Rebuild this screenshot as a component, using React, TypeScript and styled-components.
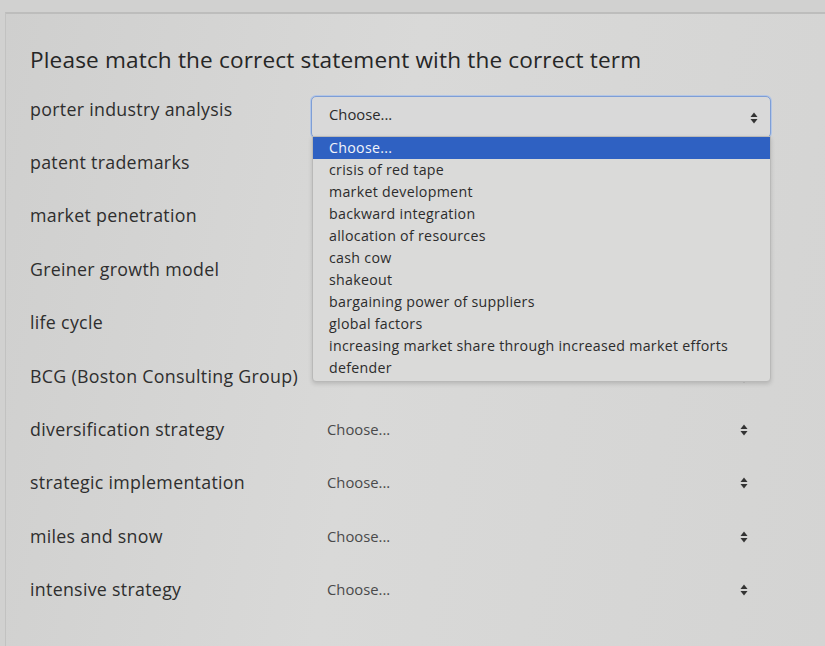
import React from "react";
import styled, { createGlobalStyle } from "styled-components";

const Global = createGlobalStyle`
  html, body { margin: 0; padding: 0; }
  body {
    background: #d1d1d0;
    font-family: "Open Sans", "Noto Sans", sans-serif;
    color: #333;
    width: 825px;
    height: 646px;
    overflow: hidden;
  }
`;

const Frame = styled.div`
  margin: 12px 0 0 5px;
  height: 640px;
  border-top: 2px solid #bdbdbc;
  border-left: 1px solid #c2c2c1;
  background: linear-gradient(100deg, #cfcfce 0%, #d9d9d8 45%, #d4d4d3 100%);
  padding: 24px 0 0 24px;
  box-sizing: border-box;
`;

const Title = styled.h1`
  margin: 0;
  font-size: 22.6px;
  font-weight: 400;
  color: #262626;
  letter-spacing: 0.15px;
  line-height: 44px;
`;

const Rows = styled.div`
  display: grid;
  grid-template-columns: 281px 460px;
  grid-auto-rows: 53.4px;
`;

const Label = styled.div`
  display: flex;
  align-items: center;
  font-size: 17.8px;
  color: #2e2e2e;
  letter-spacing: 0.3px;
`;

const SelectCell = styled.div`
  position: relative;
  display: flex;
  align-items: center;
`;

const SelectBox = styled.div<{ $focused?: boolean }>`
  width: 100%;
  height: 42px;
  box-sizing: border-box;
  margin-top: ${(p) => (p.$focused ? "16px" : "0")};
  display: flex;
  align-items: center;
  justify-content: space-between;
  padding: ${(p) => (p.$focused ? "0 12px 5px 17px" : "0 22px 0 15px")};
  border-radius: 5px;
  border: 1px solid ${(p) => (p.$focused ? "#7e9ed6" : "transparent")};
  box-shadow: ${(p) => (p.$focused ? "0 0 0 1px #b3c6e6" : "none")};
  background: ${(p) => (p.$focused ? "#d9d9d9" : "transparent")};
  font-size: 14.8px;
  color: ${(p) => (p.$focused ? "#2b2b2b" : "#4a4a4a")};
`;

const Arrows = styled.svg<{ $shift?: boolean }>`
  width: 8px;
  height: 12px;
  flex: none;
  margin-top: ${(p) => (p.$shift ? "8px" : "2px")};
`;

const List = styled.div`
  position: absolute;
  left: 1px;
  top: 54px;
  width: 457px;
  background: #dadad9;
  border: 1px solid #b9b9b8;
  border-radius: 0 0 4px 4px;
  box-shadow: 0 2px 4px rgba(0, 0, 0, 0.15);
  padding-bottom: 2px;
  z-index: 5;
`;

const Option = styled.div<{ $selected?: boolean }>`
  height: 22px;
  line-height: 22px;
  padding-left: 16px;
  font-size: 14.2px;
  letter-spacing: 0.3px;
  color: ${(p) => (p.$selected ? "#f2f4fa" : "#2c2c2c")};
  background: ${(p) => (p.$selected ? "#2f61c2" : "transparent")};
`;

const labels = [
  "porter industry analysis",
  "patent trademarks",
  "market penetration",
  "Greiner growth model",
  "life cycle",
  "BCG (Boston Consulting Group)",
  "diversification strategy",
  "strategic implementation",
  "miles and snow",
  "intensive strategy",
];

const options = [
  "Choose...",
  "crisis of red tape",
  "market development",
  "backward integration",
  "allocation of resources",
  "cash cow",
  "shakeout",
  "bargaining power of suppliers",
  "global factors",
  "increasing market share through increased market efforts",
  "defender",
];

const ArrowIcon = ({ shift }: { shift?: boolean }) => (
  <Arrows viewBox="0 0 8 12" $shift={shift}>
    <path d="M4 0.5 L7.5 5 H0.5 Z" fill="#333" />
    <path d="M4 11.5 L7.5 7 H0.5 Z" fill="#333" />
  </Arrows>
);

export default function App() {
  return (
    <>
      <Global />
      <Frame>
        <Title>Please match the correct statement with the correct term</Title>
        <Rows>
          {labels.map((l, i) => (
            <React.Fragment key={l}>
              <Label>{l}</Label>
              <SelectCell>
                <SelectBox $focused={i === 0}>
                  <span>Choose...</span>
                  <ArrowIcon shift={i === 0} />
                </SelectBox>
                {i === 0 && (
                  <List>
                    {options.map((o, j) => (
                      <Option key={o} $selected={j === 0}>
                        {o}
                      </Option>
                    ))}
                  </List>
                )}
              </SelectCell>
            </React.Fragment>
          ))}
        </Rows>
      </Frame>
    </>
  );
}
